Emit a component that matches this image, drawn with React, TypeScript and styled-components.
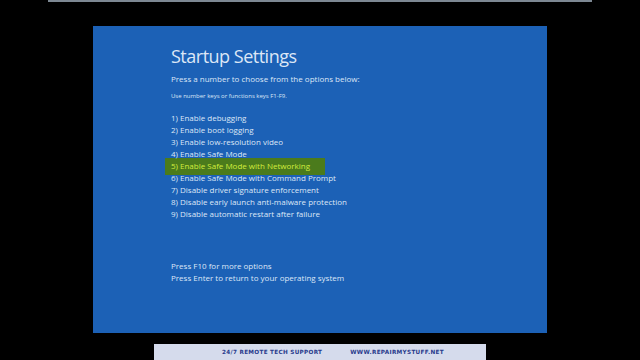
import React from 'react';
import styled, { createGlobalStyle } from 'styled-components';

const GlobalStyle = createGlobalStyle`
  html, body {
    margin: 0;
    padding: 0;
    background: #000;
  }
  #root {
    width: 640px;
    height: 360px;
    overflow: hidden;
  }
`;

const options = [
  'Enable debugging',
  'Enable boot logging',
  'Enable low-resolution video',
  'Enable Safe Mode',
  'Enable Safe Mode with Networking',
  'Enable Safe Mode with Command Prompt',
  'Disable driver signature enforcement',
  'Disable early launch anti-malware protection',
  'Disable automatic restart after failure',
];

const App = () => {
  return (
    <>
      <GlobalStyle />
      <Styled.Frame>
        <Styled.TopEdge />
        <Styled.Screen>
          <Styled.Title>Startup Settings</Styled.Title>
          <Styled.Lead>Press a number to choose from the options below:</Styled.Lead>
          <Styled.Hint>Use number keys or functions keys F1-F9.</Styled.Hint>
          <Styled.List>
            {options.map((label, i) => (
              <Styled.Item key={label} $selected={i === 4}>
                {i + 1}) {label}
              </Styled.Item>
            ))}
          </Styled.List>
          <Styled.Footer>
            <Styled.Line>Press F10 for more options</Styled.Line>
            <Styled.Line>Press Enter to return to your operating system</Styled.Line>
          </Styled.Footer>
        </Styled.Screen>
        <Styled.Banner>
          <span>24/7 REMOTE TECH SUPPORT</span>
          <span>WWW.REPAIRMYSTUFF.NET</span>
        </Styled.Banner>
      </Styled.Frame>
    </>
  );
};

const Styled = {
  Frame: styled.div`
    width: 640px;
    height: 360px;
    display: flex;
    flex-direction: column;
    align-items: center;
    background: #000;
    font-family: 'Open Sans', 'Noto Sans', sans-serif;
  `,
  TopEdge: styled.div`
    width: 544px;
    height: 2px;
    background: #7d8893;
  `,
  Screen: styled.div`
    box-sizing: border-box;
    width: 454px;
    height: 307px;
    margin-top: 24px;
    padding: 18px 0 0 78px;
    background: #1c61b6;
    color: #dce7f6;
    display: flex;
    flex-direction: column;
  `,
  Title: styled.h1`
    margin: 0;
    font-size: 18px;
    line-height: 24px;
    font-weight: 400;
    letter-spacing: -0.5px;
  `,
  Lead: styled.p`
    margin: 5px 0 0;
    font-size: 8px;
    line-height: 12px;
  `,
  Hint: styled.p`
    margin: 5px 0 0;
    font-size: 6px;
    line-height: 12px;
  `,
  List: styled.ul`
    margin: 10px 0 0;
    padding: 0;
    list-style: none;
  `,
  Item: styled.li<{ $selected?: boolean }>`
    width: max-content;
    font-size: 8px;
    line-height: 12px;
    padding: 0 6px;
    margin-left: -6px;
    ${({ $selected }) =>
      $selected &&
      `
      background: #4b7b1c;
      color: #d2ec3c;
      padding: 2.5px 15px 2.5px 6px;
      margin: -2.5px 0 -2.5px -6px;
    `}
  `,
  Footer: styled.div`
    margin-top: 40px;
  `,
  Line: styled.p`
    margin: 0;
    font-size: 8px;
    line-height: 12px;
  `,
  Banner: styled.div`
    width: 332px;
    height: 16px;
    margin-top: 11px;
    background: #d5dbec;
    display: flex;
    justify-content: center;
    align-items: center;
    gap: 28px;
    padding-left: 26px;
    box-sizing: border-box;
    color: #2a3c8c;
    font-family: 'DejaVu Sans', sans-serif;
    font-weight: 700;
    font-size: 5.7px;
    letter-spacing: 0.3px;
  `,
};

export default App;
